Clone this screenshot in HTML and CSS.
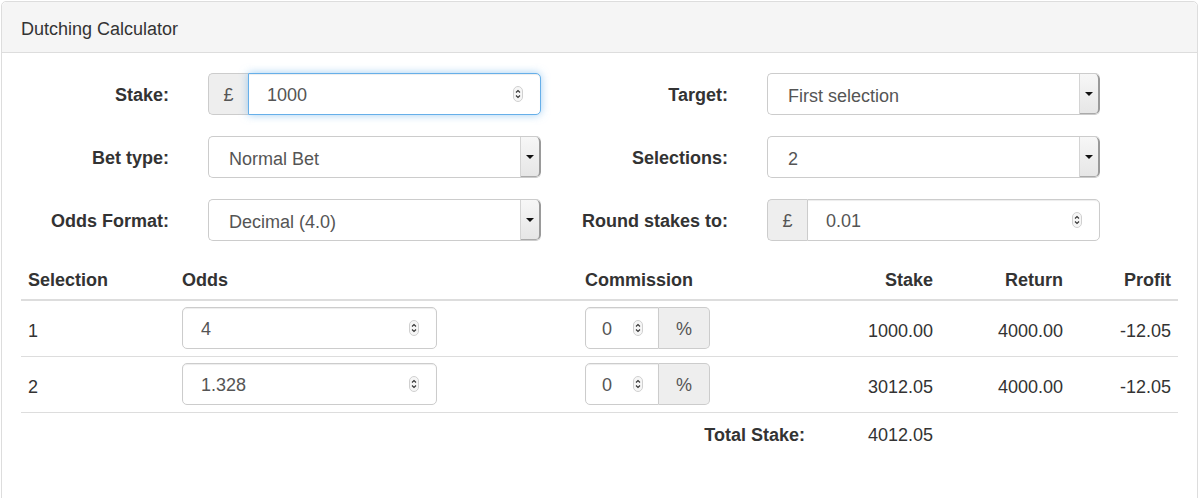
FILE: index.html
```html
<!DOCTYPE html>
<html>
<head>
    <title>Dutching Calculator</title>
    <link rel="stylesheet" href="styles.css">
</head>
<body>

<div class="panel">
  <div class="panel-heading">Dutching Calculator</div>

  <div class="panel-body">
    <div class="form-grid">
      <label class="form-label">Stake:</label>
      <div class="input-group">
        <span class="addon addon-left">£</span>
        <div class="form-control focused">
          <input type="text" value="1000">
          <svg class="spin" width="10" height="16" viewBox="0 0 10 16"><rect x="0.5" y="0.5" width="9" height="15" rx="4.5" fill="#f6f6f6" stroke="#d0d0d0"/><path d="M3 6.5 L5 4.5 L7 6.5 M3 9.5 L5 11.5 L7 9.5" fill="none" stroke="#333" stroke-width="1.1"/></svg>
        </div>
      </div>

      <label class="form-label">Target:</label>
      <div class="select-box">
        <select><option>First selection</option></select>
        <span class="select-btn"><span class="caret"></span></span>
      </div>

      <label class="form-label">Bet type:</label>
      <div class="select-box">
        <select><option>Normal Bet</option></select>
        <span class="select-btn"><span class="caret"></span></span>
      </div>

      <label class="form-label">Selections:</label>
      <div class="select-box">
        <select><option>2</option></select>
        <span class="select-btn"><span class="caret"></span></span>
      </div>

      <label class="form-label">Odds Format:</label>
      <div class="select-box">
        <select><option>Decimal (4.0)</option></select>
        <span class="select-btn"><span class="caret"></span></span>
      </div>

      <label class="form-label">Round stakes to:</label>
      <div class="input-group">
        <span class="addon addon-left">£</span>
        <div class="form-control">
          <input type="text" value="0.01">
          <svg class="spin" width="10" height="16" viewBox="0 0 10 16"><rect x="0.5" y="0.5" width="9" height="15" rx="4.5" fill="#f6f6f6" stroke="#d0d0d0"/><path d="M3 6.5 L5 4.5 L7 6.5 M3 9.5 L5 11.5 L7 9.5" fill="none" stroke="#333" stroke-width="1.1"/></svg>
        </div>
      </div>
    </div>

    <table class="table">
      <colgroup>
        <col style="width:154px">
        <col style="width:403px">
        <col style="width:234px">
        <col style="width:128px">
        <col style="width:130px">
        <col>
      </colgroup>
      <thead>
        <tr>
          <th>Selection</th>
          <th>Odds</th>
          <th>Commission</th>
          <th class="num">Stake</th>
          <th class="num">Return</th>
          <th class="num">Profit</th>
        </tr>
      </thead>
      <tbody>
        <tr>
          <td class="text">1</td>
          <td>
            <div class="form-control odds">
              <input type="text" value="4">
              <svg class="spin" width="10" height="16" viewBox="0 0 10 16"><rect x="0.5" y="0.5" width="9" height="15" rx="4.5" fill="#f6f6f6" stroke="#d0d0d0"/><path d="M3 6.5 L5 4.5 L7 6.5 M3 9.5 L5 11.5 L7 9.5" fill="none" stroke="#333" stroke-width="1.1"/></svg>
            </div>
          </td>
          <td>
            <div class="input-group commission">
              <div class="form-control comm-input">
                <input type="text" value="0">
                <svg class="spin" width="10" height="16" viewBox="0 0 10 16"><rect x="0.5" y="0.5" width="9" height="15" rx="4.5" fill="#f6f6f6" stroke="#d0d0d0"/><path d="M3 6.5 L5 4.5 L7 6.5 M3 9.5 L5 11.5 L7 9.5" fill="none" stroke="#333" stroke-width="1.1"/></svg>
              </div>
              <span class="addon addon-right">%</span>
            </div>
          </td>
          <td class="text num">1000.00</td>
          <td class="text num">4000.00</td>
          <td class="text num">-12.05</td>
        </tr>
        <tr>
          <td class="text">2</td>
          <td>
            <div class="form-control odds">
              <input type="text" value="1.328">
              <svg class="spin" width="10" height="16" viewBox="0 0 10 16"><rect x="0.5" y="0.5" width="9" height="15" rx="4.5" fill="#f6f6f6" stroke="#d0d0d0"/><path d="M3 6.5 L5 4.5 L7 6.5 M3 9.5 L5 11.5 L7 9.5" fill="none" stroke="#333" stroke-width="1.1"/></svg>
            </div>
          </td>
          <td>
            <div class="input-group commission">
              <div class="form-control comm-input">
                <input type="text" value="0">
                <svg class="spin" width="10" height="16" viewBox="0 0 10 16"><rect x="0.5" y="0.5" width="9" height="15" rx="4.5" fill="#f6f6f6" stroke="#d0d0d0"/><path d="M3 6.5 L5 4.5 L7 6.5 M3 9.5 L5 11.5 L7 9.5" fill="none" stroke="#333" stroke-width="1.1"/></svg>
              </div>
              <span class="addon addon-right">%</span>
            </div>
          </td>
          <td class="text num">3012.05</td>
          <td class="text num">4000.00</td>
          <td class="text num">-12.05</td>
        </tr>
        <tr class="total-row">
          <td></td>
          <td></td>
          <td class="num total-label">Total Stake:</td>
          <td class="num">4012.05</td>
          <td></td>
          <td></td>
        </tr>
      </tbody>
    </table>
  </div>
</div>

</body>
</html>
```

FILE: styles.css
```css
    body {
        margin: 0;
        padding: 1px 2px 0 1px;
        background-color: #fff;
        font-family: "Liberation Sans", Arial, sans-serif;
        font-size: 18px;
        color: #333;
    }

    .panel {
        border: 1px solid #ddd;
        border-radius: 5px;
        min-height: 520px;
        background-color: #fff;
    }

    .panel-heading {
        background-color: #f5f5f5;
        border-bottom: 1px solid #ddd;
        border-radius: 5px 5px 0 0;
        padding: 14px 19px 10px;
        line-height: 26px;
        font-size: 18px;
    }

    .panel-body {
        padding: 20px 19px;
    }

    /* Form: two label/control pairs per row */
    .form-grid {
        display: grid;
        grid-template-columns: 148px 333px 148px 333px;
        column-gap: 39px;
        row-gap: 21px;
        margin-bottom: 20px;
    }

    .form-label {
        font-weight: bold;
        text-align: right;
        white-space: nowrap;
        align-self: center;
        padding-top: 3px;
    }

    .input-group {
        display: flex;
        height: 42px;
    }

    .addon {
        display: flex;
        align-items: center;
        justify-content: center;
        width: 40px;
        padding-top: 2px;
        box-sizing: border-box;
        background-color: #eee;
        border: 1px solid #ccc;
        color: #555;
    }

    .addon-left {
        border-right: none;
        border-radius: 5px 0 0 5px;
    }

    .addon-right {
        border-left: 1px solid #ccc;
        border-radius: 0 5px 5px 0;
        width: 51px;
    }

    .form-control {
        display: flex;
        align-items: center;
        flex: 1;
        min-width: 0;
        height: 42px;
        box-sizing: border-box;
        border: 1px solid #ccc;
        border-radius: 5px;
        padding: 0 17px 0 18px;
        background-color: #fff;
        box-shadow: inset 0 1px 1px rgba(0, 0, 0, .075);
    }

    .input-group .addon-left + .form-control {
        border-radius: 0 5px 5px 0;
    }

    .form-control.focused {
        border-color: #66afe9;
        box-shadow: inset 0 1px 1px rgba(0, 0, 0, .075), 0 0 8px rgba(102, 175, 233, .6);
    }

    .form-control input {
        flex: 1;
        min-width: 0;
        width: 10px;
        border: none;
        outline: none;
        padding: 3px 0 0;
        font-family: inherit;
        font-size: 18px;
        color: #555;
        background: transparent;
    }

    .spin {
        flex: none;
        display: block;
    }

    /* Mac style select */
    .select-box {
        display: flex;
        height: 42px;
        box-sizing: border-box;
        border: 1px solid #ccc;
        border-right: none;
        border-radius: 5px;
        background-color: #fff;
        overflow: hidden;
    }

    .select-box select {
        flex: 1;
        appearance: none;
        -webkit-appearance: none;
        border: none;
        outline: none;
        background: transparent;
        padding: 3px 0 0 20px;
        font-family: inherit;
        font-size: 18px;
        color: #555;
    }

    .select-btn {
        display: flex;
        align-items: center;
        justify-content: center;
        width: 18px;
        border-left: 1px solid #d4d4d4;
        border-right: 2px solid #9a9a9a;
        border-bottom: 1px solid #aaa;
        border-radius: 0 5px 5px 0;
        background: linear-gradient(#f7f7f7, #e6e6e6);
    }

    .caret {
        width: 0;
        height: 0;
        border-left: 4px solid transparent;
        border-right: 4px solid transparent;
        border-top: 4px solid #111;
    }

    /* Results table */
    .table {
        width: 100%;
        border-collapse: collapse;
        table-layout: fixed;
    }

    .table th {
        text-align: left;
        font-weight: bold;
        padding: 9px 7px 8px;
        line-height: 21px;
        border-bottom: 2px solid #ddd;
    }

    .table td {
        padding: 6px 7px 7px;
        line-height: 21px;
        border-bottom: 1px solid #ddd;
        vertical-align: middle;
    }

    .table td.text {
        padding-top: 9px;
        padding-bottom: 4px;
    }

    .table .num {
        text-align: right;
    }

    .table .odds {
        width: 255px;
        flex: none;
    }

    .commission {
        width: 125px;
    }

    .comm-input {
        flex: none;
        width: 74px;
        padding-left: 16px;
        padding-right: 15px;
        border-radius: 5px 0 0 5px;
    }

    .comm-input + .addon-right {
        border-left: none;
    }

    .total-row td {
        border-bottom: none;
        padding-top: 12px;
    }

    .total-label {
        font-weight: bold;
    }
```
